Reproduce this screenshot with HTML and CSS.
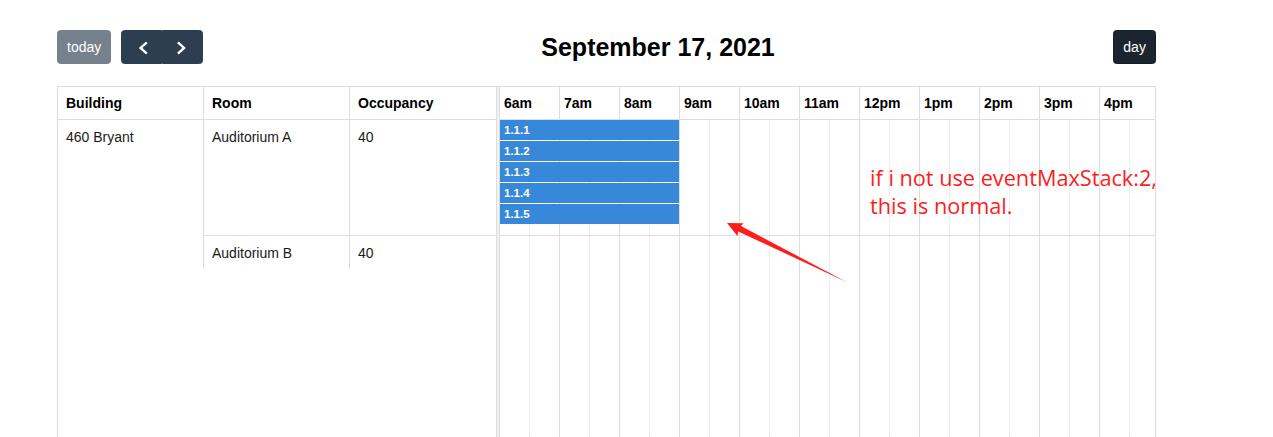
FILE: index.html
```html
<!DOCTYPE html>
<html lang="en">
<head>
    <meta charset="UTF-8">
    <meta name="viewport" content="width=device-width, initial-scale=1.0">
    <title>Resource Timeline - eventMaxStack</title>
    <link rel="stylesheet" href="styles.css">
</head>
<body>

    <div class="calendar">
        <div class="toolbar">
            <div class="toolbar-chunk">
                <button class="btn btn-today">today</button>
                <div class="btn-group">
                    <button class="btn btn-icon" aria-label="prev">
                        <svg width="20.5" height="21" viewBox="0 0 21 21"><polyline points="14.3,6 8.8,11 14.3,16" /></svg>
                    </button>
                    <button class="btn btn-icon" aria-label="next">
                        <svg width="20.5" height="21" viewBox="0 0 21 21"><polyline points="6.9,6 12.4,11 6.9,16" /></svg>
                    </button>
                </div>
            </div>
            <h2 class="title">September 17, 2021</h2>
            <div class="toolbar-chunk">
                <button class="btn btn-active">day</button>
            </div>
        </div>

        <div class="view">
            <div class="resources">
                <div class="res-head">
                    <div class="cell head">Building</div>
                    <div class="cell head">Room</div>
                    <div class="cell head last">Occupancy</div>
                </div>
                <div class="res-body">
                    <div class="cell building">460 Bryant</div>
                    <div class="cell room first-row">Auditorium A</div>
                    <div class="cell occ first-row">40</div>
                    <div class="cell room">Auditorium B</div>
                    <div class="cell occ">40</div>
                </div>
            </div>

            <div class="divider"></div>

            <div class="timeline">
                <div class="time-head">
                    <div class="slot-label">6am</div>
                    <div class="slot-label">7am</div>
                    <div class="slot-label">8am</div>
                    <div class="slot-label">9am</div>
                    <div class="slot-label">10am</div>
                    <div class="slot-label">11am</div>
                    <div class="slot-label">12pm</div>
                    <div class="slot-label">1pm</div>
                    <div class="slot-label">2pm</div>
                    <div class="slot-label">3pm</div>
                    <div class="slot-label">4pm</div>
                </div>
                <div class="time-body">
                    <div class="slots">
                        <div class="slot"></div>
                        <div class="slot"></div>
                        <div class="slot"></div>
                        <div class="slot"></div>
                        <div class="slot"></div>
                        <div class="slot"></div>
                        <div class="slot"></div>
                        <div class="slot"></div>
                        <div class="slot"></div>
                        <div class="slot"></div>
                        <div class="slot"></div>
                    </div>
                    <div class="lanes">
                        <div class="lane lane-first">
                            <div class="event">1.1.1</div>
                            <div class="event">1.1.2</div>
                            <div class="event">1.1.3</div>
                            <div class="event">1.1.4</div>
                            <div class="event">1.1.5</div>
                        </div>
                        <div class="lane"></div>
                    </div>
                </div>
            </div>
        </div>
    </div>

    <!-- annotation drawn over the screenshot -->
    <div class="note">if i not use eventMaxStack:2,<br>this is normal.</div>
    <svg class="arrow" width="1273" height="437" viewBox="0 0 1273 437">
        <polygon points="727,223 743.6,223.3 741,226 847.5,282.5 738.3,231.4 737.4,235.9" />
    </svg>

</body>
</html>
```

FILE: styles.css
```css
body, html {
    margin: 0;
    padding: 0;
    font-family: "Liberation Sans", Arial, sans-serif;
    font-size: 14px;
    color: #1a1a1a;
    background: #fff;
    overflow: hidden;
    width: 100%;
    height: 100%;
}

.calendar {
    width: 1099px;
    margin: 30px 0 0 57px;
}

/* Toolbar */
.toolbar {
    display: flex;
    justify-content: space-between;
    align-items: center;
    margin-bottom: 22px;
}

.toolbar-chunk {
    display: flex;
    align-items: center;
}

.title {
    margin: 0;
    font-size: 25px;
    line-height: 1.2;
    font-weight: bold;
    color: #000;
}

.btn {
    display: flex;
    align-items: center;
    font-family: inherit;
    font-size: 14px;
    line-height: 21px;
    height: 34px;
    padding: 5.6px 9.1px;
    box-sizing: border-box;
    color: #fff;
    background-color: #2c3e50;
    border: 1px solid #2c3e50;
    border-radius: 3.5px;
}

.btn-today {
    opacity: 0.65;
}

.btn-active {
    background-color: #1a252f;
    border-color: #151e27;
}

.btn-group {
    display: flex;
    margin-left: 10px;
}

.btn-group .btn:first-child {
    border-radius: 3.5px 0 0 3.5px;
}

.btn-group .btn:last-child {
    border-radius: 0 3.5px 3.5px 0;
}

.btn-icon svg {
    display: block;
}

.btn-icon polyline {
    fill: none;
    stroke: #fff;
    stroke-width: 2.4;
    stroke-linecap: square;
    stroke-linejoin: miter;
}

/* View */
.view {
    display: flex;
    height: 360px;
    border: 1px solid #ddd;
    border-bottom: none;
}

.resources {
    width: 438px;
    flex-shrink: 0;
}

.res-head,
.res-body {
    display: grid;
    grid-template-columns: 146px 146px 146px;
}

.res-head {
    height: 33px;
    border-bottom: 1px solid #ddd;
    box-sizing: border-box;
}

.res-body {
    grid-template-rows: 116px 33px;
}

.cell {
    padding: 8px;
    line-height: 18px;
    box-sizing: border-box;
    white-space: nowrap;
}

.cell.head {
    padding: 7px 8px;
    font-weight: bold;
    color: #000;
    border-right: 1px solid #ddd;
}

.cell.head.last {
    border-right: none;
}

.building {
    grid-row: span 2;
    border-right: 1px solid #ddd;
}

.room {
    border-right: 1px solid #ddd;
}

.first-row {
    border-bottom: 1px solid #ddd;
}

.divider {
    width: 4px;
    flex-shrink: 0;
    box-sizing: border-box;
    border-left: 1px solid #ddd;
    border-right: 1px solid #ddd;
    background: rgba(208, 208, 208, 0.3);
}

/* Timeline */
.timeline {
    flex: 1;
    min-width: 0;
    overflow: hidden;
    display: flex;
    flex-direction: column;
}

.time-head {
    display: flex;
    height: 33px;
    border-bottom: 1px solid #ddd;
    box-sizing: border-box;
}

.slot-label {
    flex: 0 0 60px;
    box-sizing: border-box;
    border-right: 1px solid #ddd;
    padding: 7px 4px;
    line-height: 18px;
    font-weight: bold;
    color: #000;
}

.time-body {
    flex: 1;
    display: grid;
}

.slots,
.lanes {
    grid-area: 1 / 1;
}

.slots {
    display: flex;
}

.slot {
    flex: 0 0 60px;
    display: flex;
    box-sizing: border-box;
    border-right: 1px solid #ddd;
}

.slot::before {
    content: "";
    margin-left: 29px;
    border-left: 1px dotted #ddd;
}

.lane {
    height: 33px;
}

.lane-first {
    height: 116px;
    box-sizing: border-box;
    border-bottom: 1px solid #ddd;
}

.event {
    width: 179px;
    height: 20px;
    margin-bottom: 1px;
    padding-left: 4px;
    box-sizing: border-box;
    background-color: #3788d8;
    color: #fff;
    font-size: 11.5px;
    font-weight: bold;
    line-height: 20px;
}

/* Red annotation */
.note {
    position: absolute;
    left: 870px;
    top: 164px;
    font-family: "Open Sans", "Noto Sans", sans-serif;
    font-size: 21.7px;
    line-height: 28px;
    color: #fd1d1d;
    white-space: nowrap;
}

.arrow {
    position: absolute;
    left: 0;
    top: 0;
    pointer-events: none;
}

.arrow polygon {
    fill: #fd1d1d;
}
```
